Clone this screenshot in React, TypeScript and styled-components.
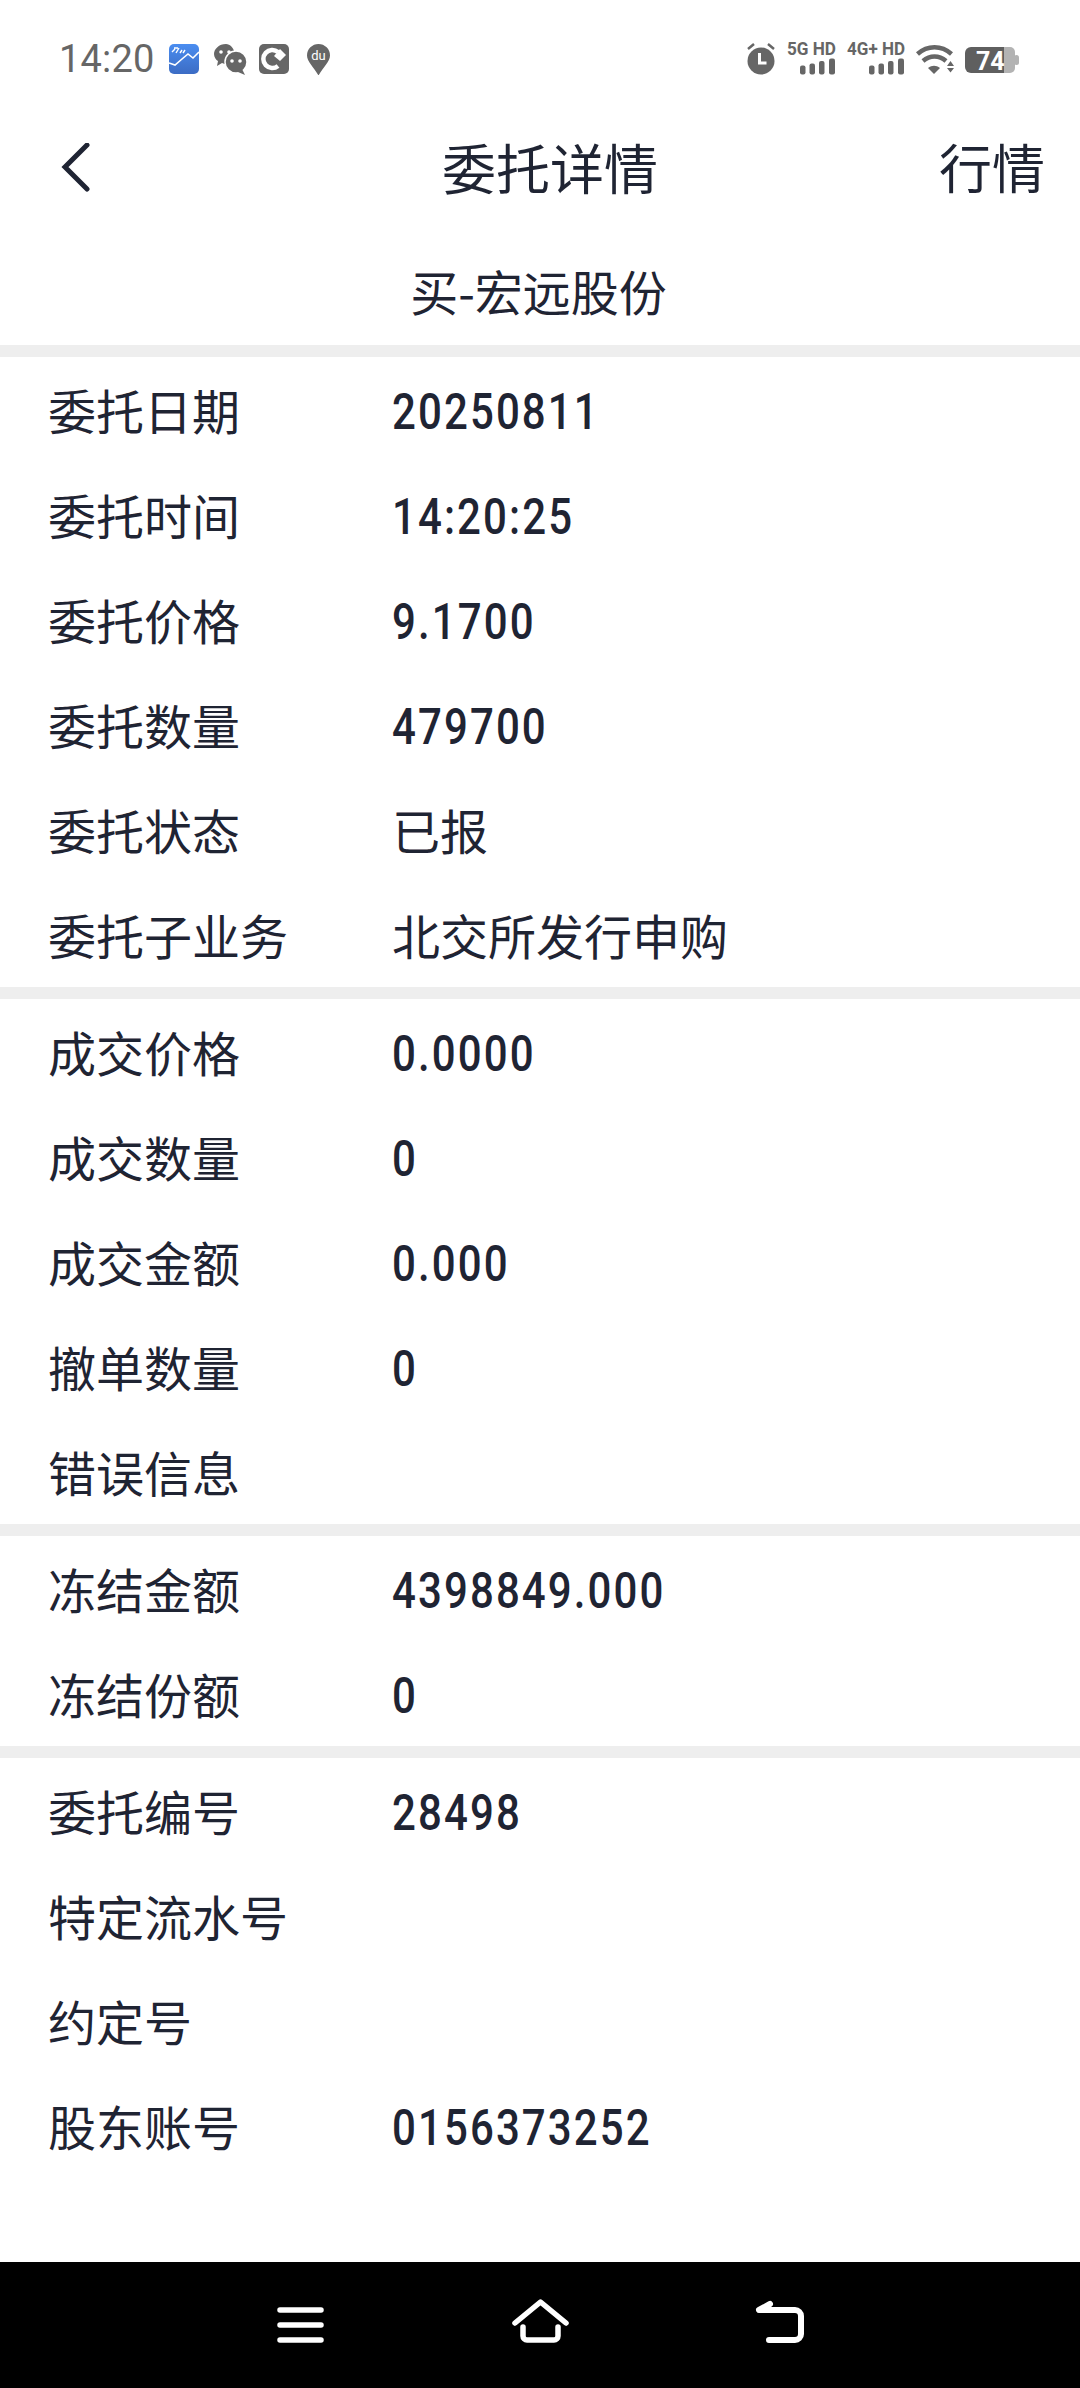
import React from "react";
import styled, { createGlobalStyle } from "styled-components";

const Global = createGlobalStyle`
  html, body { margin: 0; padding: 0; background: #fff; }
  * { box-sizing: border-box; }
`;
const Page = styled.div`
  width: 1080px; height: 2388px; display: flex; flex-direction: column; background: #fff;
  font-family: "Noto Sans CJK SC", Roboto, sans-serif; color: #1f2433; overflow: hidden;
`;
const StatusBar = styled.div`
  height: 118px; flex: none; padding: 0 61px 0 59px; display: flex; align-items: center; justify-content: space-between;
`;
const StatusGroup = styled.div`display: flex; align-items: center;`;
const Time = styled.span`font: 400 38px Roboto, sans-serif; color: #666; margin-right: 14px; letter-spacing: 0.2px;`;
const Header = styled.div`
  height: 100px; flex: none; position: relative; display: flex; align-items: center; justify-content: center;
`;
const HeaderTitle = styled.div`font-size: 54px; line-height: 1; margin: 0 0 3px 20px;`;
const Back = styled.svg`position: absolute; left: 60px; top: 25px;`;
const HeaderAction = styled.div`position: absolute; right: 35px; top: 22px; font-size: 53px; line-height: 1;`;
const StockName = styled.div`
  height: 127px; flex: none; display: flex; align-items: center; justify-content: center; font-size: 48px; padding: 16px 3px 0 0;
`;
const Divider = styled.div`height: 12px; flex: none; background: #eeeeee;`;
const Row = styled.div`height: 105px; display: flex; align-items: center; padding-left: 48px;`;
const Label = styled.div`width: 344px; flex: none; font-size: 48px; line-height: 1; margin-top: -2px;`;
const CjkValue = styled.div`font-size: 48px; line-height: 1; margin-top: -2px;`;
const NumberValue = styled.div`
  font-family: Roboto, sans-serif;
  font-size: 50px;
  font-weight: 500;
  line-height: 1;
  letter-spacing: 2.500px;
  margin-top: 5px;
  transform: scaleX(0.84);
  transform-origin: left center;
`;
const NavBar = styled.div`
  margin-top: auto; height: 126px; flex: none; background: #000; position: relative;
`;
const NavIcon = styled.svg<{ $left: number; $top: number }>`position: absolute; left: ${p => p.$left}px; top: ${p => p.$top}px;`;

const groups: [string, string][][] = [
  [["委托日期", "20250811"], ["委托时间", "14:20:25"], ["委托价格", "9.1700"], ["委托数量", "479700"], ["委托状态", "已报"], ["委托子业务", "北交所发行申购"]],
  [["成交价格", "0.0000"], ["成交数量", "0"], ["成交金额", "0.000"], ["撤单数量", "0"], ["错误信息", ""]],
  [["冻结金额", "4398849.000"], ["冻结份额", "0"]],
  [["委托编号", "28498"], ["特定流水号", ""], ["约定号", ""], ["股东账号", "0156373252"]],
];

const Left = () => (
  <svg width="170" height="32" viewBox="0 0 170 32" style={{ display: "block" }}>
    <defs>
      <linearGradient id="bl" x1="0" y1="0" x2="0" y2="1"><stop offset="0" stopColor="#4a8df0" /><stop offset="1" stopColor="#3c6cc4" /></linearGradient>
    </defs>
    <rect x="0" y="1" width="30" height="30" rx="5" fill="url(#bl)" />
    <path d="M0 20 L6 22 L13 16 L19 11 L24 15 L30 9" fill="none" stroke="#fff" strokeWidth="1.6" />
    <path d="M3 9l3-3M7 10l3-5M11 10l2-3M14 10l2-3M5 5h4" stroke="#fff" strokeWidth="1.4" />
    <g fill="#666">
      <path d="M57 1c-7 0-12 5-12 10 0 3 2 6 4 7l-1 5 5-3c2 1 3 1 5 1l8-10c-1-6-5-10-9-10z" />
      <circle cx="67" cy="19" r="11" stroke="#fff" strokeWidth="1.5" />
      <path d="M73 26l3 6-7-3z" />
    </g>
    <circle cx="52" cy="9" r="1.8" fill="#fff" /><circle cx="60" cy="9" r="1.8" fill="#fff" />
    <circle cx="63" cy="18" r="1.8" fill="#fff" /><circle cx="71" cy="18" r="1.8" fill="#fff" />
    <rect x="90" y="1" width="30" height="30" rx="5" fill="#666" />
    <path d="M109 9a9 9 0 1 0 0 14" fill="none" stroke="#fff" strokeWidth="4.500" />
    <path d="M105 13l6-7 6 6-6 6z" fill="#fff" />
    <path d="M112 4l6 6" stroke="#666" strokeWidth="2" />
    <path d="M149.500 1a11.500 11.500 0 0 1 11.500 11.500c0 6-7 12-11.500 20-4.500-8-11.500-14-11.500-20A11.500 11.500 0 0 1 149.500 1z" fill="#666" />
    <text x="149.500" y="17" textAnchor="middle" fontSize="13" fill="#fff" fontFamily="Roboto, sans-serif">du</text>
  </svg>
);

const Bars = ({ x }: { x: number }) => (
  <g fill="#666">
    <rect x={x} y="26.600" width="5.500" height="9" rx="2" />
    <rect x={x + 9.500} y="24.600" width="5.500" height="11" rx="2" />
    <rect x={x + 19} y="22" width="5.500" height="13.600" rx="2" />
    <rect x={x + 29} y="19.600" width="6" height="16" rx="2" />
  </g>
);

const Right = () => (
  <svg width="274" height="40" viewBox="0 0 274 40" style={{ display: "block" }}>
    <circle cx="16" cy="22" r="13.500" fill="#666" />
    <path d="M14.500 14v10h7" fill="none" stroke="#fff" strokeWidth="3" />
    <path d="M3 10l6-5M29 10l-6-5" stroke="#666" strokeWidth="2.500" />
    <text x="42" y="16" fontSize="18" fontWeight="700" fill="#666" fontFamily="Roboto, sans-serif" textLength="49" lengthAdjust="spacingAndGlyphs">5G HD</text>
    <Bars x={55} />
    <text x="102" y="16" fontSize="18" fontWeight="700" fill="#666" fontFamily="Roboto, sans-serif" textLength="58" lengthAdjust="spacingAndGlyphs">4G+ HD</text>
    <Bars x={124} />
    <g fill="none" stroke="#666" strokeWidth="4.500">
      <path d="M172.500 15c10-9 24-9 34 0" />
      <path d="M178 22c7-6 16-6 23 0" />
    </g>
    <path d="M183 29c4-3 8-3 12 0l-6 6z" fill="#666" />
    <path d="M205.500 22l3.500 5h-7zM202 29h7l-3.500 4.500z" fill="#666" />
    <path d="M255 8h10a5 5 0 0 1 5 5v16a5 5 0 0 1-5 5h-10z" fill="#b3b3b3" />
    <rect x="269" y="16" width="5" height="10" rx="2.500" fill="#b3b3b3" />
    <path d="M226 8h33v26h-33a6 6 0 0 1-6-6v-14a6 6 0 0 1 6-6z" fill="#5f5f5f" />
    <text x="231" y="31" fontSize="25" fontWeight="700" fill="#fff" fontFamily="Roboto, sans-serif">74</text>
  </svg>
);

export default function App() {
  return (
    <Page>
      <Global />
      <StatusBar>
        <StatusGroup><Time>14:20</Time><Left /></StatusGroup>
        <StatusGroup><Right /></StatusGroup>
      </StatusBar>
      <Header>
        <Back width="32" height="50" viewBox="0 0 32 50"><path d="M27 2 L5 24 L27 46" fill="none" stroke="#1f2433" strokeWidth="5" strokeLinecap="round" /></Back>
        <HeaderTitle>委托详情</HeaderTitle>
        <HeaderAction>行情</HeaderAction>
      </Header>
      <StockName>买-宏远股份</StockName>
      {groups.map((g, i) => (
        <React.Fragment key={i}>
          <Divider />
          {g.map(([l, v]) => (
            <Row key={l}>
              <Label>{l}</Label>
              {/[\u4e00-\u9fff]/.test(v) ? <CjkValue>{v}</CjkValue> : <NumberValue>{v}</NumberValue>}
            </Row>
          ))}
        </React.Fragment>
      ))}
      <NavBar>
        <NavIcon $left={277} $top={42} width="47" height="40" viewBox="0 0 47 40">
          <path d="M3 6h41M3 21h41M3 36h41" stroke="#fff" strokeWidth="5.500" strokeLinecap="round" />
        </NavIcon>
        <NavIcon $left={512} $top={37} width="58" height="46" viewBox="0 0 58 46">
          <path d="M3 24 L28.500 3 L54 24M11 28v9a4 4 0 0 0 4 4h27a4 4 0 0 0 4-4v-9" fill="none" stroke="#fff" strokeWidth="5.500" strokeLinecap="round" strokeLinejoin="round" />
        </NavIcon>
        <NavIcon $left={754} $top={37} width="54" height="46" viewBox="0 0 54 46">
          <path d="M16 5 L5 11 H41 a6 6 0 0 1 6 6 V35 a6 6 0 0 1-6 6 H15" fill="none" stroke="#fff" strokeWidth="6" strokeLinecap="round" strokeLinejoin="round" />
        </NavIcon>
      </NavBar>
    </Page>
  );
}
